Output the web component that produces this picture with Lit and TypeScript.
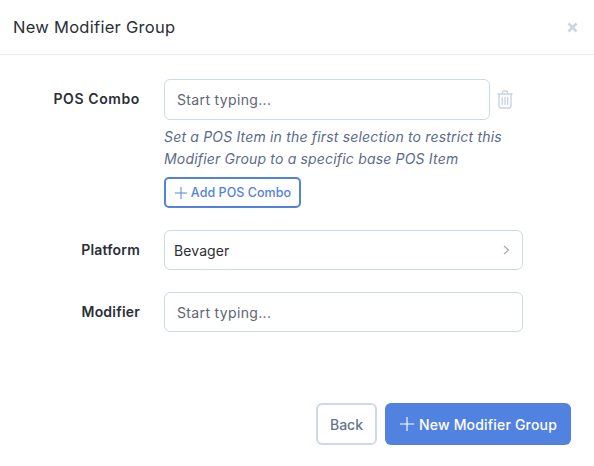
import { LitElement, html, css } from "lit";
import { customElement } from "lit/decorators.js";

const plus = (size: number) => html`<svg class="plus" width=${size} height=${size} viewBox="0 0 16 16" fill="none" stroke="currentColor" stroke-width="1.1"><path d="M8 1v14M1 8h14"/></svg>`;

@customElement("app-root")
export class AppRoot extends LitElement {
  static styles = css`
    :host { display: flex; flex-direction: column; width: 594px; height: 466px; background: #fff; font-family: Inter, "Noto Sans", sans-serif; color: #2b2f36; box-sizing: border-box; overflow: hidden; }
    .header { height: 54px; flex: none; display: flex; align-items: center; justify-content: space-between; padding: 0 15px 0 13px; border-bottom: 1px solid #e8edf3; }
    .title { font-size: 16.5px; font-weight: 400; letter-spacing: 0.28px; }
    .close { display: block; margin-right: 1px; }
    .body { flex: 1; display: flex; flex-direction: column; padding-top: 24px; }
    .row { display: grid; grid-template-columns: 140px 1fr; column-gap: 24px; padding-right: 71px; }
    .row + .row { margin-top: 22px; }
    .label { font-size: 14px; font-weight: 600; text-align: right; line-height: 40px; letter-spacing: 0.2px; }
    .label.wide { letter-spacing: 0.6px; }
    .field { height: 40px; box-sizing: border-box; border: 1px solid #cdd8e8; border-radius: 6px; display: flex; align-items: center; justify-content: space-between; padding: 0 12px; font-size: 14px; letter-spacing: 0.35px; }
    .select { padding-left: 9px; letter-spacing: 0.1px; }
    .placeholder { color: #5d6675; }
    .value { color: #2b2f36; }
    .combo-line { display: flex; align-items: center; gap: 7px; }
    .combo-line .field { width: 326px; flex: none; height: 41px; }
    .help { margin: 6px 0 0; font-size: 14px; font-style: italic; line-height: 22px; color: #5a6b8a; letter-spacing: 0.18px; white-space: nowrap; }
    .add { margin-top: 7px; height: 31px; width: 137px; box-sizing: border-box; border: 2px solid #5282df; border-radius: 5px; background: #fff; color: #5282df; font: 500 12.5px Inter, sans-serif; display: flex; align-items: center; justify-content: center; gap: 3px; padding: 0; letter-spacing: 0.05px; }
    .footer { margin-top: auto; display: flex; justify-content: flex-end; gap: 8px; padding: 0 23px 21px 0; }
    .back, .primary { height: 42px; box-sizing: border-box; border-radius: 6px; font: 500 14px Inter, sans-serif; display: flex; align-items: center; justify-content: center; padding: 0; }
    .back { width: 61px; background: #fff; border: 2px solid #cdd8e8; color: #64748f; }
    .primary { width: 186px; background: #5282df; border: none; color: #fff; gap: 4px; letter-spacing: 0.18px; }
    .plus { display: block; flex: none; }
  `;

  render() {
    return html`
      <div class="header">
        <div class="title">New Modifier Group</div>
        <svg class="close" width="11" height="11" viewBox="0 0 11 11" stroke="#cfd5de" stroke-width="2.6"><path d="M1.5 1.5l8 8M9.5 1.5l-8 8"/></svg>
      </div>
      <div class="body">
        <div class="row">
          <div class="label wide">POS Combo</div>
          <div>
            <div class="combo-line">
              <div class="field"><span class="placeholder">Start typing...</span></div>
              <svg width="16" height="19" viewBox="0 0 16 19" fill="none" stroke="#c8d2e2" stroke-width="1.3"><path d="M.5 4h15M5.5 4V2.2C5.5 1.4 6 1 6.7 1h2.6c.7 0 1.2.4 1.2 1.2V4M2 4v12.5c0 1 .6 1.5 1.5 1.5h9c.9 0 1.5-.5 1.5-1.5V4M5.3 7v8M8 7v8M10.7 7v8"/></svg>
            </div>
            <p class="help">Set a POS Item in the first selection to restrict this<br />Modifier Group to a specific base POS Item</p>
            <button class="add">${plus(14)}Add POS Combo</button>
          </div>
        </div>
        <div class="row">
          <div class="label">Platform</div>
          <div class="field select"><span class="value">Bevager</span>
            <svg width="7" height="10" viewBox="0 0 7 10" fill="none" stroke="#a9aeb6" stroke-width="1.3"><path d="M1 1l4.5 4L1 9"/></svg>
          </div>
        </div>
        <div class="row">
          <div class="label">Modifier</div>
          <div class="field"><span class="placeholder">Start typing...</span></div>
        </div>
        <div class="footer">
          <button class="back">Back</button>
          <button class="primary">${plus(16)}New Modifier Group</button>
        </div>
      </div>
    `;
  }
}
